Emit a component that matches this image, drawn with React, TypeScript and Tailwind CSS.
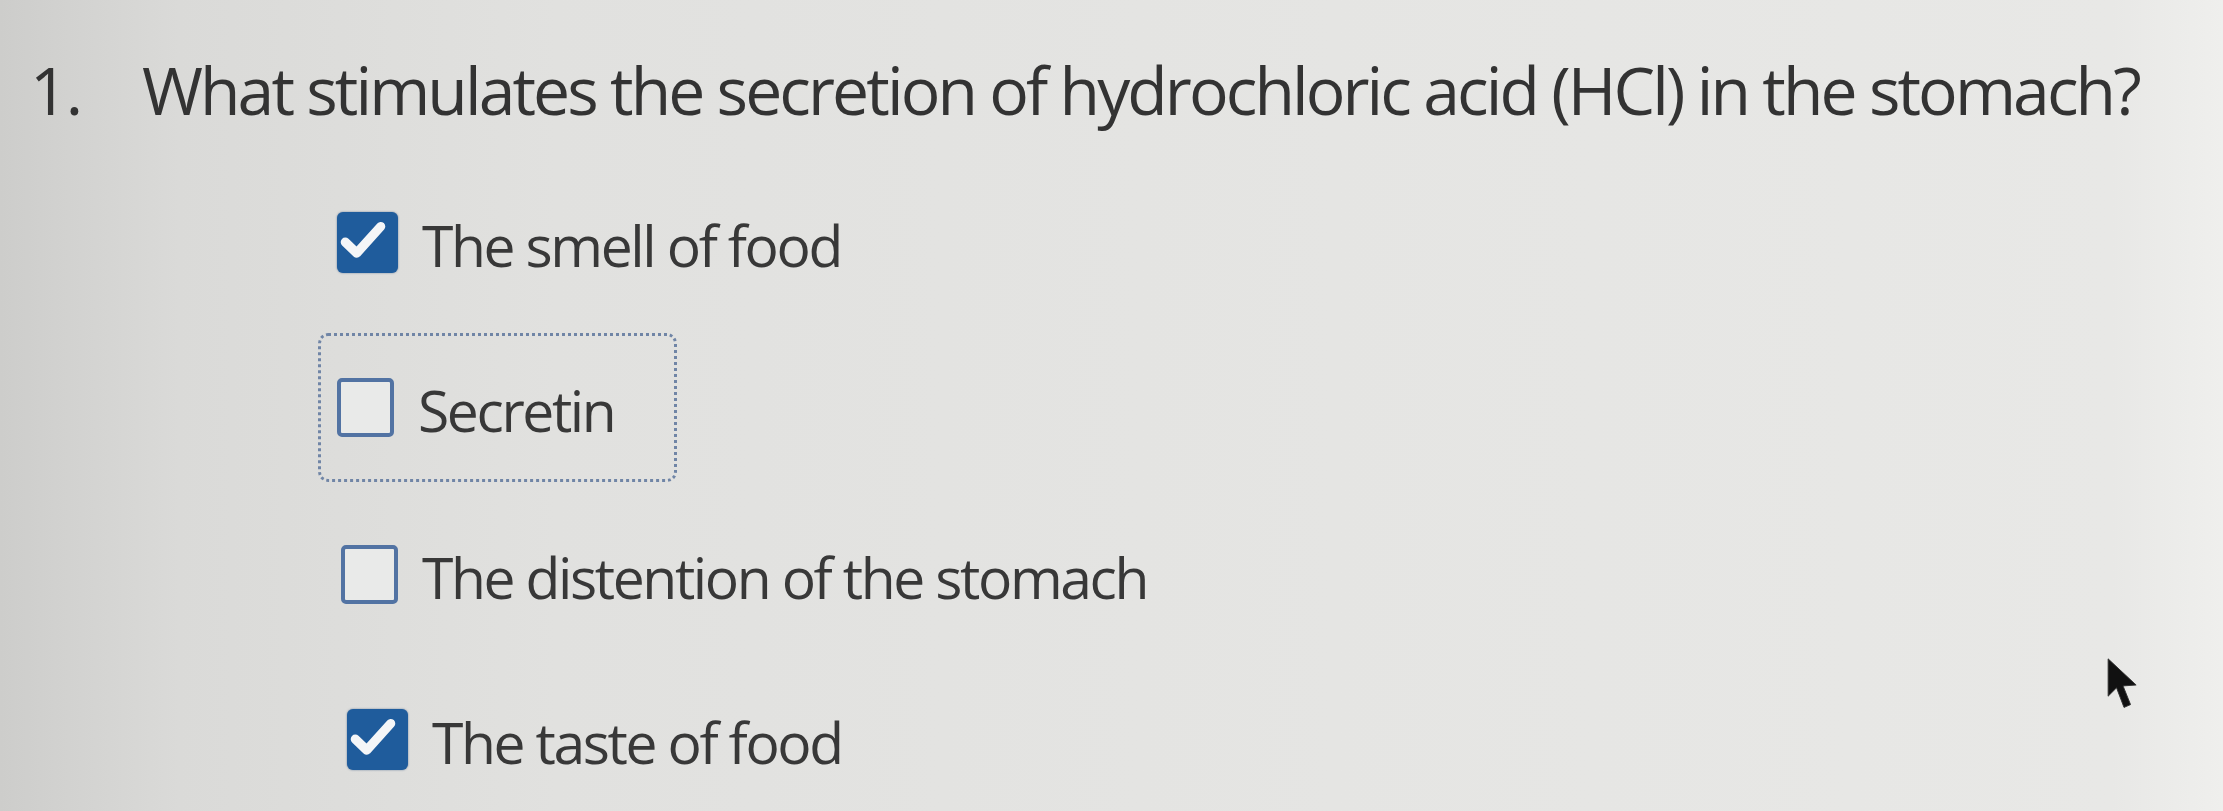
import React from "react";

const font = { fontFamily: '"Open Sans", "Noto Sans", "Liberation Sans", sans-serif' };

function CheckBox({ checked }: { checked: boolean }) {
  if (checked) {
    return (
      <span className="flex h-[61px] w-[61px] shrink-0 items-center justify-center rounded-[6px] bg-[#1f5c9c] shadow-[0_0_2px_rgba(20,60,110,0.6)]">
        <svg width="50" height="50" viewBox="0 0 24 24" className="-ml-[10px] -mt-[8px]">
          <path d="M3.5 13.5 L9 18.8 L20.5 6" fill="none" stroke="#f4f6f8" strokeWidth="4.4" strokeLinecap="round" strokeLinejoin="round" />
        </svg>
      </span>
    );
  }
  return (
    <span className="block h-[59px] w-[57px] shrink-0 rounded-[5px] border-[4px] border-[#5273a3] bg-[#e9eae9]" />
  );
}

function Option({ label, checked, focused, shift }: { label: string; checked: boolean; focused?: boolean; shift: string }) {
  return (
    <div className={`flex ${shift}`}>
      <div
        className={`flex items-center gap-[24px] rounded-[10px] border-[3px] border-dotted py-[40px] pl-[16px] pr-[60px] ${
          focused ? "border-[#7085a6]" : "border-transparent"
        }`}
      >
        <CheckBox checked={checked} />
        <span className="mt-[6px] text-[57px] leading-none tracking-[-0.042em] text-[#383838]" style={font}>
          {label}
        </span>
      </div>
    </div>
  );
}

export default function App() {
  return (
    <div className="relative h-[811px] w-full overflow-hidden bg-[linear-gradient(90deg,#cdcdcb_0%,#dadad8_8%,#e1e1df_25%,#e5e5e3_60%,#e8e8e6_95%,#efefed_100%)]">
      <div className="pt-[56px] pl-[30px] flex text-[#333333]" style={font}>
        <span className="w-[112px] text-[66px] leading-none tracking-[-0.03em]">1.</span>
        <span className="text-[66px] leading-none tracking-[-0.044em]">
          What stimulates the secretion of hydrochloric acid (HCl) in the stomach?
        </span>
      </div>
      <div className="mt-[46px] ml-[318px] flex flex-col">
        <Option label="The smell of food" checked shift="ml-0" />
        <Option label="Secretin" checked={false} focused shift="ml-0 mt-[16px]" />
        <Option label="The distention of the stomach" checked={false} shift="ml-[4px] mt-[18px]" />
        <Option label="The taste of food" checked shift="ml-[10px] mt-[16px]" />
      </div>
      <svg className="absolute left-[2105px] top-[657px]" width="38" height="56" viewBox="0 0 40 60">
        <path d="M3 2 L3 42 L12 33 L20 54 L27 51 L19 31 L33 30 Z" fill="#111" stroke="#333" strokeWidth="1" />
      </svg>
    </div>
  );
}
